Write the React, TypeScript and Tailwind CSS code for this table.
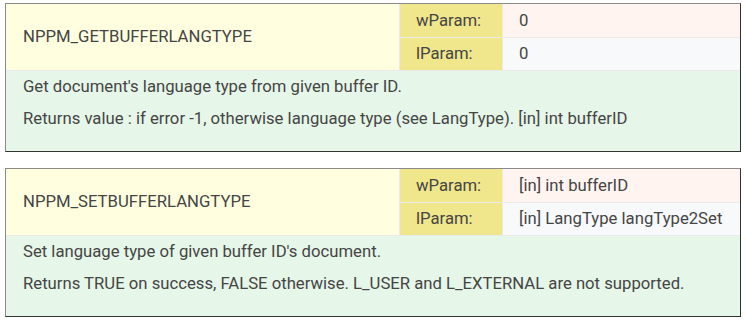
import React from 'react';

interface MessageDoc {
  name: string;
  wParam: string;
  lParam: string;
  lines: string[];
}

const messages: MessageDoc[] = [
  {
    name: 'NPPM_GETBUFFERLANGTYPE',
    wParam: '0',
    lParam: '0',
    lines: [
      "Get document's language type from given buffer ID.",
      'Returns value : if error -1, otherwise language type (see LangType). [in] int bufferID',
    ],
  },
  {
    name: 'NPPM_SETBUFFERLANGTYPE',
    wParam: '[in] int bufferID',
    lParam: '[in] LangType langType2Set',
    lines: [
      "Set language type of given buffer ID's document.",
      'Returns TRUE on success, FALSE otherwise. L_USER and L_EXTERNAL are not supported.',
    ],
  },
];

const MessageCard: React.FC<{ doc: MessageDoc }> = ({ doc }) => (
  <div className="w-[736px] border border-t-[#8a8a8a] border-l-[#8a8a8a] border-r-[#333] border-b-[#333]">
    <div className="grid grid-cols-[393px_102px_237px] gap-px bg-[#eaeaea]">
      {/* name cell spans both param rows */}
      <div className="row-span-2 flex items-center bg-[#ffffe0] pl-[17px]">{doc.name}</div>
      <div className="flex h-[33px] items-center bg-[#f0e68c] pl-[16px]">wParam:</div>
      <div className="flex items-center bg-[#fff4ef] pl-[16px]">{doc.wParam}</div>
      <div className="flex h-[32px] items-center bg-[#f0e68c] pl-[16px]">lParam:</div>
      <div className="flex items-center bg-[#f8f9fb] pl-[16px]">{doc.lParam}</div>
      <div className="col-span-3 flex flex-col gap-[12px] bg-[#e6f6e8] pl-[17px] pt-[6px] pb-[22px]">
        {doc.lines.map((line) => (
          <p key={line} className="leading-[20px]">{line}</p>
        ))}
      </div>
    </div>
  </div>
);

export default function App() {
  return (
    <div className="flex flex-col gap-[16px] bg-white px-[5px] pt-[3px] font-['Roboto',sans-serif] text-[16.7px] text-[#454545]">
      {messages.map((m) => (
        <MessageCard key={m.name} doc={m} />
      ))}
    </div>
  );
}
